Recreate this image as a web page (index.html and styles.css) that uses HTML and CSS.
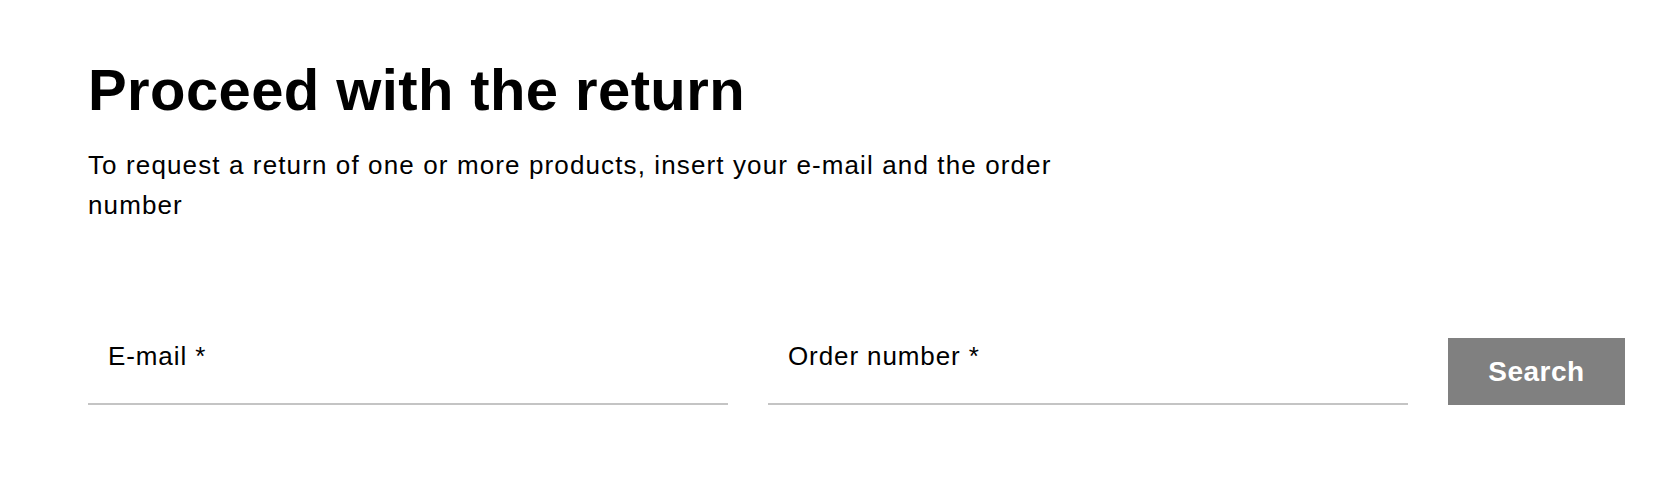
FILE: index.html
```html
<!DOCTYPE html>
<html lang="en">
<head>
<meta charset="utf-8">
<title>Proceed with the return</title>
<link rel="stylesheet" href="styles.css">
</head>
<body>
<main class="page">
  <h1 class="title">Proceed with the return</h1>
  <p class="intro">To request a return of one or more products, insert your e-mail and the order number</p>
  <form class="form">
    <label class="field">
      <span class="field-label">E-mail *</span>
    </label>
    <label class="field">
      <span class="field-label">Order number *</span>
    </label>
    <button type="button" class="btn">Search</button>
  </form>
</main>
</body>
</html>
```

FILE: styles.css
```css
* { box-sizing: border-box; }
html, body { margin: 0; padding: 0; background: #fff; }
body {
  font-family: "Liberation Sans", Arial, sans-serif;
  color: #000;
}
.page {
  padding: 56px 43px 0 88px;
}
.title {
  margin: 0;
  font-size: 58px;
  line-height: 68px;
  font-weight: 700;
  letter-spacing: 0.4px;
}
.intro {
  margin: 21px 0 0;
  max-width: 1040px;
  font-size: 26px;
  line-height: 40px;
  letter-spacing: 1.12px;
}
.form {
  display: flex;
  align-items: flex-end;
  gap: 40px;
  margin-top: 113px;
}
.field {
  flex: 1 1 0;
  display: flex;
  align-items: center;
  height: 67px;
  padding: 0 20px 29px;
  border-bottom: 2px solid #c4c4c4;
}
.field-label {
  font-size: 26px;
  line-height: 30px;
  letter-spacing: 0.9px;
}
.btn {
  flex: 0 0 177px;
  height: 67px;
  border: 0;
  background: #808080;
  color: #fff;
  font-family: inherit;
  font-size: 28px;
  font-weight: 700;
  letter-spacing: 0.5px;
  cursor: pointer;
}
```
